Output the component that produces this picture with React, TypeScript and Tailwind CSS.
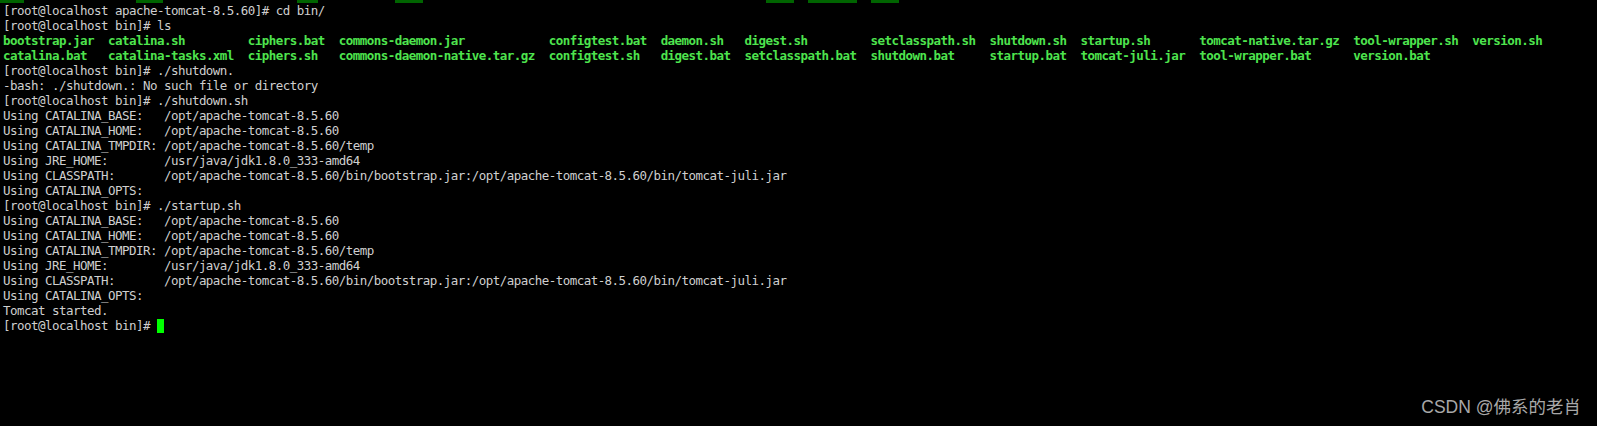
import React from "react";

const lsRow1: [string, number][] = [
  ["bootstrap.jar", 15],
  ["catalina.sh", 20],
  ["ciphers.bat", 13],
  ["commons-daemon.jar", 30],
  ["configtest.bat", 16],
  ["daemon.sh", 12],
  ["digest.sh", 18],
  ["setclasspath.sh", 17],
  ["shutdown.sh", 13],
  ["startup.sh", 17],
  ["tomcat-native.tar.gz", 22],
  ["tool-wrapper.sh", 17],
  ["version.sh", 0],
];

const lsRow2: [string, number][] = [
  ["catalina.bat", 15],
  ["catalina-tasks.xml", 20],
  ["ciphers.sh", 13],
  ["commons-daemon-native.tar.gz", 30],
  ["configtest.sh", 16],
  ["digest.bat", 12],
  ["setclasspath.bat", 18],
  ["shutdown.bat", 17],
  ["startup.bat", 13],
  ["tomcat-juli.jar", 17],
  ["tool-wrapper.bat", 22],
  ["version.bat", 0],
];

const envLines = [
  "Using CATALINA_BASE:   /opt/apache-tomcat-8.5.60",
  "Using CATALINA_HOME:   /opt/apache-tomcat-8.5.60",
  "Using CATALINA_TMPDIR: /opt/apache-tomcat-8.5.60/temp",
  "Using JRE_HOME:        /usr/java/jdk1.8.0_333-amd64",
  "Using CLASSPATH:       /opt/apache-tomcat-8.5.60/bin/bootstrap.jar:/opt/apache-tomcat-8.5.60/bin/tomcat-juli.jar",
  "Using CATALINA_OPTS:",
];

// leftover bits of the line scrolled off the top
const topBars = [
  { ml: "ml-0", w: "w-[24px]" },
  { ml: "ml-[112px]", w: "w-[27px]" },
  { ml: "ml-[134px]", w: "w-[21px]" },
  { ml: "ml-[77px]", w: "w-[28px]" },
  { ml: "ml-[343px]", w: "w-[28px]" },
  { ml: "ml-[14px]", w: "w-[49px]" },
  { ml: "ml-[14px]", w: "w-[28px]" },
];

function Line({ children }: { children?: React.ReactNode }) {
  return <div className="h-[15px] leading-[15px] whitespace-pre">{children}</div>;
}

function LsRow({ items }: { items: [string, number][] }) {
  return (
    <Line>
      {items.map(([name, pad]) => (
        <span key={name} className="font-bold text-[#4ee44e]">
          {pad ? name.padEnd(pad, " ") : name}
        </span>
      ))}
    </Line>
  );
}

export default function App() {
  return (
    <div className="w-[1597px] h-[426px] bg-black overflow-hidden flex flex-col">
      <div className="flex h-[3px] shrink-0">
        {topBars.map((b, i) => (
          <div key={i} className={`${b.ml} ${b.w} h-full bg-[#006400]`} />
        ))}
      </div>
      <div
        className="flex-1 pl-[3px] text-[12.5px] tracking-[-0.53px] text-[#cfcfcf]"
        style={{ fontFamily: '"DejaVu Sans Mono", "Liberation Mono", monospace' }}
      >
        <Line>[root@localhost apache-tomcat-8.5.60]# cd bin/</Line>
        <Line>[root@localhost bin]# ls</Line>
        <LsRow items={lsRow1} />
        <LsRow items={lsRow2} />
        <Line>[root@localhost bin]# ./shutdown.</Line>
        <Line>-bash: ./shutdown.: No such file or directory</Line>
        <Line>[root@localhost bin]# ./shutdown.sh</Line>
        {envLines.map((l) => (
          <Line key={"a" + l}>{l}</Line>
        ))}
        <Line>[root@localhost bin]# ./startup.sh</Line>
        {envLines.map((l) => (
          <Line key={"b" + l}>{l}</Line>
        ))}
        <Line>Tomcat started.</Line>
        <Line>
          [root@localhost bin]# <span className="inline-block w-[7px] h-[14px] align-[-3px] bg-[#00ff00]" />
        </Line>
      </div>
      <div className="flex justify-end pr-[16px] pb-[6px]">
        <span
          className="text-[17.5px] text-[#a8a8a8]"
          style={{ fontFamily: '"Liberation Sans", "Noto Sans CJK SC", sans-serif' }}
        >
          CSDN @佛系的老肖
        </span>
      </div>
    </div>
  );
}
